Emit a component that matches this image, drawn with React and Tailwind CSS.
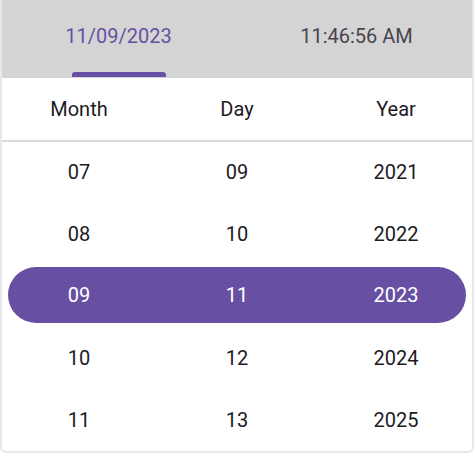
import React from "react";

const rows = [
  ["07", "09", "2021"],
  ["08", "10", "2022"],
  ["09", "11", "2023"],
  ["10", "12", "2024"],
  ["11", "13", "2025"],
];

export default function App() {
  return (
    <div className="w-[474px] h-[453px] overflow-hidden bg-white border-x-2 border-b-2 border-[#e8e8e8] rounded-b-[6px] font-['Roboto',sans-serif] text-[20px]">
      <div className="h-[78px] -mx-[2px] bg-[#d4d4d4] grid grid-cols-2">
        <div className="flex flex-col items-center">
          <div className="h-[72px] flex items-center pb-[1px] text-[#6750a4]">11/09/2023</div>
          <div className="w-[94px] h-[5px] rounded-t-[3px] bg-[#6750a4]" />
        </div>
        <div className="flex flex-col items-center pl-[2px]">
          <div className="h-[72px] flex items-center pb-[1px] text-[#49454f]">11:46:56 AM</div>
        </div>
      </div>
      <div className="h-[64px] -mx-[2px] border-b-2 border-[#dadada] grid grid-cols-3 items-center text-center text-[#1c1b1f]">
        <div>Month</div>
        <div>Day</div>
        <div className="pl-[2px]">Year</div>
      </div>
      {rows.map((r, i) => {
        const sel = i === 2;
        return (
          <div key={i} className="relative h-[62px]">
            {sel && (
              <div className="absolute left-[6px] right-[6px] top-[1px] h-[56px] rounded-full bg-[#6750a4]" />
            )}
            <div
              className={
                sel
                  ? "relative -mx-[2px] h-[58px] grid grid-cols-3 items-center text-center text-white"
                  : "relative -mx-[2px] h-[60px] grid grid-cols-3 items-center text-center text-[#1c1b1f]"
              }
            >
              <div>{r[0]}</div>
              <div>{r[1]}</div>
              <div className="pl-[2px]">{r[2]}</div>
            </div>
          </div>
        );
      })}
    </div>
  );
}
